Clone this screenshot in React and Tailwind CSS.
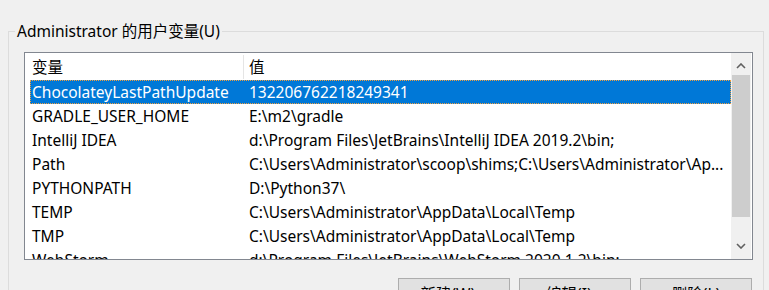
import React from "react";

const rows = [
    ["ChocolateyLastPathUpdate", "132206762218249341"],
    ["GRADLE_USER_HOME", "E:\\m2\\gradle"],
    ["IntelliJ IDEA", "d:\\Program Files\\JetBrains\\IntelliJ IDEA 2019.2\\bin;"],
    ["Path", "C:\\Users\\Administrator\\scoop\\shims;C:\\Users\\Administrator\\Ap..."],
    ["PYTHONPATH", "D:\\Python37\\"],
    ["TEMP", "C:\\Users\\Administrator\\AppData\\Local\\Temp"],
    ["TMP", "C:\\Users\\Administrator\\AppData\\Local\\Temp"],
    ["WebStorm", "d:\\Program Files\\JetBrains\\WebStorm 2020.1.2\\bin;"],
];

const font = { fontFamily: '"Noto Sans", "Noto Sans CJK SC", sans-serif' };

function Chevron({ down }) {
    return (
        <svg width="10" height="6" viewBox="0 0 10 6" className="block">
            <path
                d={down ? "M1 1 L5 5 L9 1" : "M1 5 L5 1 L9 5"}
                fill="none"
                stroke="#606060"
                strokeWidth="1.6"
            />
        </svg>
    );
}

export default function App() {
    return (
        <div
            className="w-[769px] h-[290px] overflow-hidden bg-[#f0f0f0] text-[15.5px] text-black pt-[21px]"
            style={font}
        >
            <fieldset className="ml-[8px] mr-[5px] border border-[#dcdcdc] h-[300px] px-0">
                <legend className="ml-[6px] px-[2px] leading-[20px]">
                    Administrator 的用户变量(U)
                </legend>

                {/* list view */}
                <div className="mt-[11px] ml-[15px] w-[729px] h-[208px] border border-[#828790] bg-white flex overflow-hidden">
                    <div className="flex-1 overflow-hidden">
                        <div className="flex h-[27px] items-center">
                            <div className="w-[218px] pl-[7px] pt-[2px]">变量</div>
                            <div className="w-px h-[24px] bg-[#e5e5e5]" />
                            <div className="pl-[5px] pt-[2px]">值</div>
                        </div>
                        {rows.map(([name, value], i) => (
                            <div
                                key={name}
                                className={
                                    "ml-[5px] w-[701px] h-[24px] flex items-center whitespace-nowrap border pt-[2px] " +
                                    (i === 0
                                        ? "bg-[#0078d7] text-white border-dotted border-[#f0a040]"
                                        : "border-transparent")
                                }
                            >
                                <div className="w-[218px] pl-px">{name}</div>
                                <div>{value}</div>
                            </div>
                        ))}
                    </div>
                    {/* scrollbar */}
                    <div className="w-[20px] mr-px bg-[#f0f0f0] flex flex-col">
                        <div className="h-[22px] flex items-center justify-center pt-[3px]">
                            <Chevron />
                        </div>
                        <div className="mx-px h-[142px] bg-[#cdcdcd]" />
                        <div className="flex-1" />
                        <div className="h-[26px] flex items-center justify-center">
                            <Chevron down />
                        </div>
                    </div>
                </div>

                <div className="mt-[18px] ml-[389px] flex gap-[9px]">
                    {["新建(W)...", "编辑(I)...", "删除(L)"].map((b) => (
                        <div
                            key={b}
                            className="w-[112px] h-[34px] bg-[#e1e1e1] border border-[#adadad] flex items-center justify-center"
                        >
                            {b}
                        </div>
                    ))}
                </div>
            </fieldset>
        </div>
    );
}
